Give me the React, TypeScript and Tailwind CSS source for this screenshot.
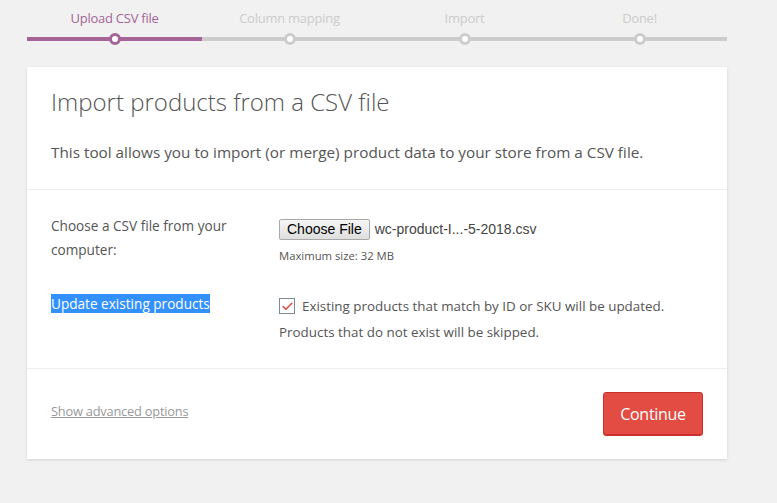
import { Check } from 'lucide-react'

const steps = ['Upload CSV file', 'Column mapping', 'Import', 'Done!']

export default function App() {
  return (
    <div
      className="min-h-[503px] w-full bg-[#f1f1f1] text-[#555]"
      style={{ fontFamily: '"Open Sans", "Noto Sans", sans-serif' }}
    >
      <div className="mx-[27px] w-[700px]">
        {/* Steps */}
        <div className="flex pt-[9px]">
          {steps.map((step, i) => (
            <div key={step} className="flex w-[175px] flex-col items-center">
              <span
                className={`text-[13px] leading-[18px] tracking-[-0.25px] ${
                  i === 0 ? 'text-[#a46497]' : 'text-[#ccc]'
                }`}
              >
                {step}
              </span>
              <div className="relative mt-[6px] h-[12px] w-full">
                <div
                  className={`absolute left-0 right-0 top-[4px] h-[4px] ${
                    i === 0 ? 'bg-[#a46497]' : 'bg-[#ccc]'
                  }`}
                />
                <div
                  className={`absolute left-1/2 top-0 h-[12px] w-[12px] -translate-x-1/2 rounded-full border-[3px] bg-white ${
                    i === 0 ? 'border-[#a46497]' : 'border-[#ccc]'
                  }`}
                />
              </div>
            </div>
          ))}
        </div>

        {/* Card */}
        <div className="mt-[22px] bg-white shadow-[0_1px_3px_rgba(0,0,0,0.13)]">
          <div className="border-b border-[#eee] px-[24px] pb-[26px] pt-[19px]">
            <h1 className="text-[24px] font-light leading-[32px] text-[#555]">
              Import products from a CSV file
            </h1>
            <p className="mt-[23px] text-[15.3px] leading-[22px] text-[#555]">
              This tool allows you to import (or merge) product data to your store from a CSV file.
            </p>
          </div>

          <div className="border-b border-[#eee] px-[24px] pb-[26px] pt-[24px]">
            <div className="flex">
              <div className="w-[228px] pr-[30px] text-[13.6px] leading-[24px]">
                Choose a CSV file from your computer:
              </div>
              <div className="pt-[5px]">
                <div className="flex items-center gap-[5px]">
                  <button
                    className="h-[21px] rounded-[2px] border border-[#a9a9a9] bg-gradient-to-b from-[#f6f6f6] to-[#dedede] px-[7px] text-[14px] leading-[19px] text-black"
                    style={{ fontFamily: '"Liberation Sans", Arial, sans-serif' }}
                  >
                    Choose File
                  </button>
                  <span
                    className="text-[14px] text-[#444]"
                    style={{ fontFamily: '"Liberation Sans", Arial, sans-serif' }}
                  >
                    wc-product-I...-5-2018.csv
                  </span>
                </div>
                <div className="mt-[9px] text-[11.3px] leading-[14px] text-[#555]">
                  Maximum size: 32 MB
                </div>
              </div>
            </div>

            <div className="mt-[33px] flex">
              <div className="-mt-[1px] w-[228px] text-[13.6px] leading-[18px]">
                <span className="bg-[#3390ff] text-white">Update existing products</span>
              </div>
              <div className="text-[13.4px]">
                <div className="flex items-center gap-[7px]">
                  <span className="flex h-[16px] w-[16px] items-center justify-center border border-[#7e8993] bg-white">
                    <Check className="h-[13px] w-[13px] text-[#e24c43]" strokeWidth={3} />
                  </span>
                  <span className="leading-[20px]">
                    Existing products that match by ID or SKU will be updated.
                  </span>
                </div>
                <div className="mt-[6px] leading-[20px]">Products that do not exist will be skipped.</div>
              </div>
            </div>
          </div>

          <div className="flex items-center justify-between px-[24px] py-[23px]">
            <a href="#" className="pb-[4px] text-[12.8px] tracking-[-0.2px] text-[#999] underline">
              Show advanced options
            </a>
            <button className="h-[44px] w-[100px] rounded-[3px] border border-[#c9302c] bg-[#e24c43] text-[16px] tracking-[-0.3px] text-white shadow-[inset_0_-1px_0_#c9302c]">
              Continue
            </button>
          </div>
        </div>
      </div>
    </div>
  )
}
